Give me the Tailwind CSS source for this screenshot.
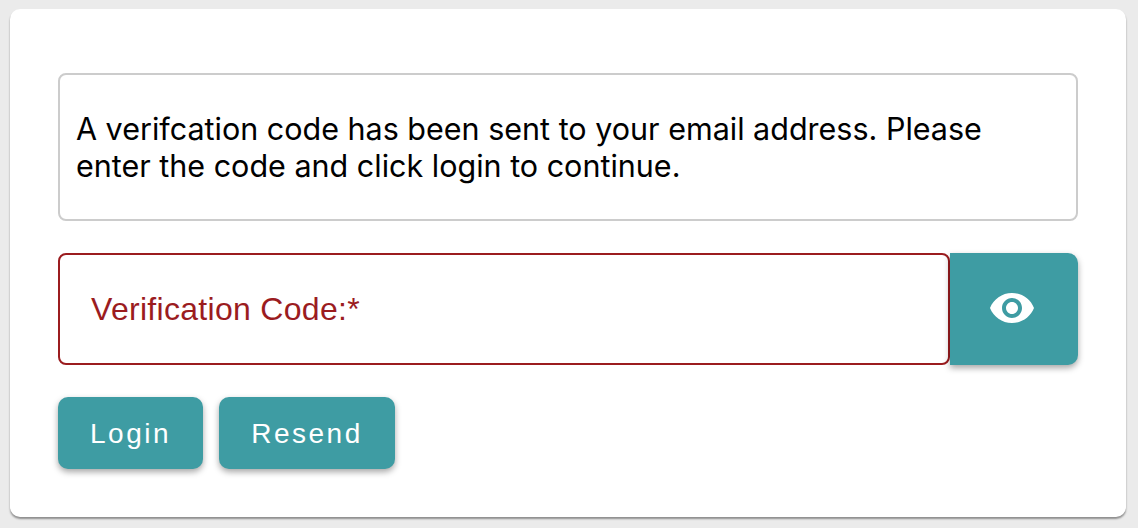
<!DOCTYPE html>
<html lang="en">
  <head>
    <meta charset="UTF-8" />
    <meta name="viewport" content="width=device-width, initial-scale=1.0" />
    <title>Verification</title>
    <script src="https://cdn.jsdelivr.net/npm/@tailwindcss/browser@4"></script>
  </head>
  <body class="bg-[#ebebeb] h-[528px] overflow-hidden pt-[9px] pl-[10px] pr-[12px] font-['Liberation_Sans',sans-serif]">
    <div class="bg-white h-[508px] rounded-[10px] px-[48px] pt-[64px] shadow-[0_2px_2px_rgba(0,0,0,0.4)]">
      <!-- Message -->
      <div class="h-[148px] border-2 border-[#cccccc] rounded-[8px] px-[16px] pt-[35px] font-['Inter',sans-serif] text-[30.5px] leading-[37px] text-black">
        A verifcation code has been sent to your email address. Please enter the code and click login to continue.
      </div>

      <!-- Code field -->
      <div class="flex mt-[32px] h-[112px]">
        <div class="flex-1 flex items-center border-2 border-[#9b1c1f] rounded-[8px] pl-[31px] text-[32px] tracking-[0.3px] text-[#9b1c1f]">
          Verification Code:*
        </div>
        <button class="w-[128px] flex items-center justify-center bg-[#3e9ca3] rounded-r-[10px] pr-[4px] pb-[2px] shadow-[0_3px_6px_rgba(0,0,0,0.35)]">
          <svg class="w-[48px] h-[48px] fill-white" viewBox="0 0 24 24">
            <path d="M12 4.5C7 4.5 2.73 7.61 1 12c1.73 4.39 6 7.5 11 7.5s9.27-3.11 11-7.5c-1.73-4.39-6-7.5-11-7.5zM12 17c-2.76 0-5-2.24-5-5s2.24-5 5-5 5 2.24 5 5-2.24 5-5 5zm0-8c-1.66 0-3 1.34-3 3s1.34 3 3 3 3-1.34 3-3-1.34-3-3-3z" />
          </svg>
        </button>
      </div>

      <!-- Actions -->
      <div class="flex gap-[16px] mt-[32px]">
        <button class="w-[145px] h-[72px] bg-[#3e9ca3] rounded-[10px] pt-[2px] text-white text-[28px] tracking-[2.5px] shadow-[0_3px_6px_rgba(0,0,0,0.35)]">Login</button>
        <button class="w-[176px] h-[72px] bg-[#3e9ca3] rounded-[10px] pt-[2px] text-white text-[28px] tracking-[2.5px] shadow-[0_3px_6px_rgba(0,0,0,0.35)]">Resend</button>
      </div>
    </div>
  </body>
</html>
